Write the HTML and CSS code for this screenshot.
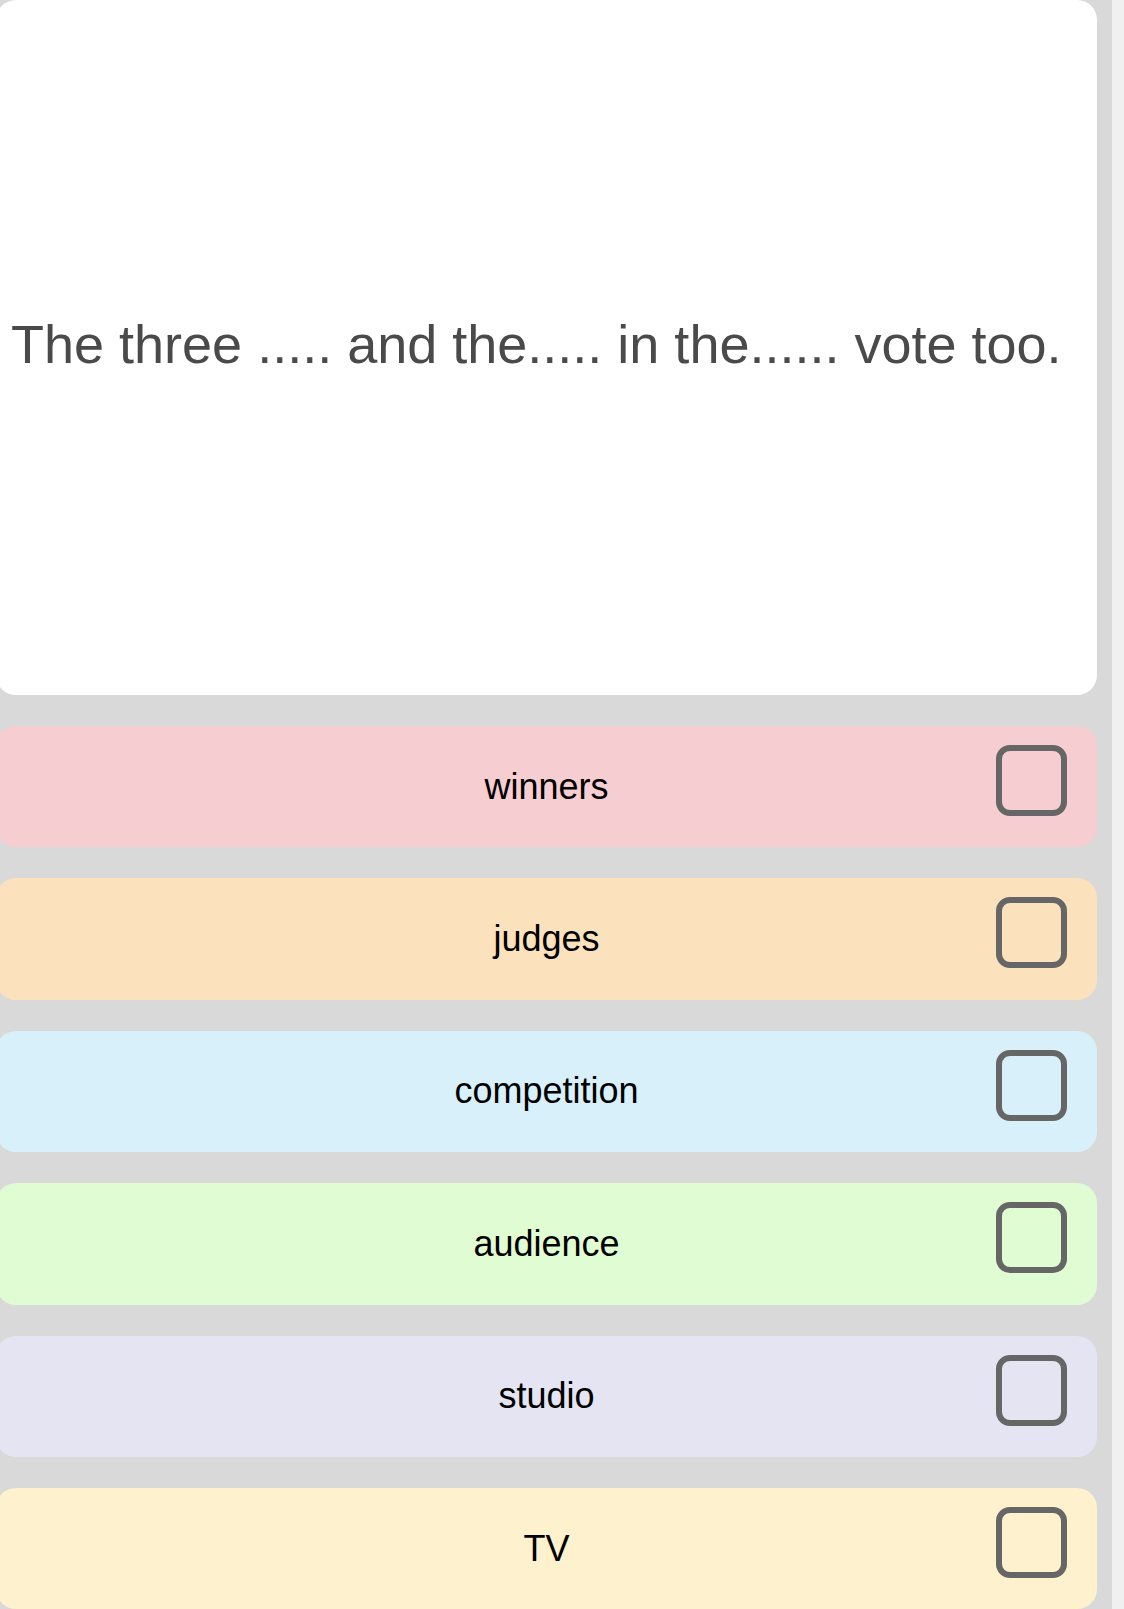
FILE: index.html
```html
<!DOCTYPE html>
<html lang="en">
<head>
    <meta charset="UTF-8">
    <meta name="viewport" content="width=device-width, initial-scale=1.0">
    <title>Quiz</title>
    <link rel="stylesheet" href="styles.css">
</head>
<body>
    <div class="quiz">
        <!-- Question card -->
        <div class="question">
            <p>The three ..... and the..... in the...... vote too.</p>
        </div>

        <!-- Answer options -->
        <div class="options">
            <label class="option pink">
                <span class="option-text">winners</span>
                <span class="check"></span>
            </label>
            <label class="option orange">
                <span class="option-text">judges</span>
                <span class="check"></span>
            </label>
            <label class="option blue">
                <span class="option-text">competition</span>
                <span class="check"></span>
            </label>
            <label class="option green">
                <span class="option-text">audience</span>
                <span class="check"></span>
            </label>
            <label class="option lavender">
                <span class="option-text">studio</span>
                <span class="check"></span>
            </label>
            <label class="option yellow">
                <span class="option-text">TV</span>
                <span class="check"></span>
            </label>
        </div>
    </div>
</body>
</html>
```

FILE: styles.css
```css
body {
    margin: 0;
    background-color: #f0f0f0;
    font-family: "Liberation Sans", Arial, sans-serif;
    overflow: hidden;
}

.quiz {
    width: 1112px;
    min-height: 1609px;
    background-color: #d9d9d9;
}

.question {
    width: 1101px;
    height: 695px;
    margin-left: -4px;
    background-color: #fff;
    border-radius: 20px;
    display: flex;
    align-items: center;
    box-sizing: border-box;
    padding: 0 0 8px 15px;
}

.question p {
    margin: 0;
    font-size: 54px;
    color: #4a4a4a;
}

.options {
    display: flex;
    flex-direction: column;
    gap: 31px;
    padding-top: 31px;
}

.option {
    width: 1101px;
    height: 121.4px;
    margin-left: -4px;
    border-radius: 20px;
    display: grid;
    grid-template-columns: 1fr auto 1fr;
    align-items: center;
    cursor: pointer;
}

.option-text {
    grid-column: 2;
    font-size: 36px;
    color: #000;
}

.check {
    grid-column: 3;
    justify-self: end;
    align-self: start;
    width: 71px;
    height: 71px;
    margin: 19px 30px 0 0;
    box-sizing: border-box;
    border: 6px solid #666;
    border-radius: 14px;
}

.pink { background-color: #f6cdd0; }
.orange { background-color: #fbe2bc; }
.blue { background-color: #d8f0fa; }
.green { background-color: #e0fcd2; }
.lavender { background-color: #e4e4f2; }
.yellow { background-color: #fef1cd; }
```
